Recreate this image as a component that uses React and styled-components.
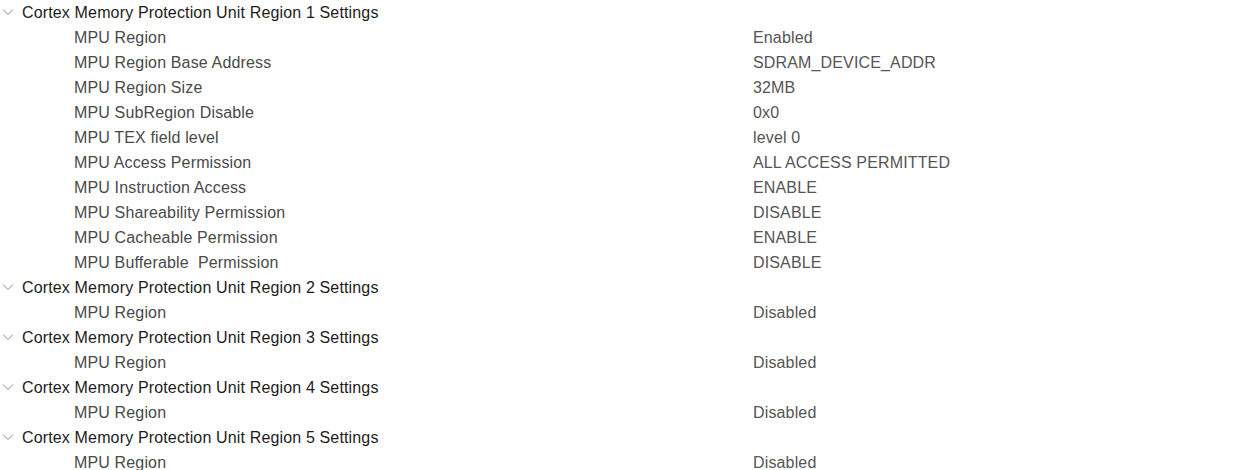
import React from 'react';
import styled, { createGlobalStyle } from 'styled-components';

const GlobalStyle = createGlobalStyle`
  html, body {
    margin: 0;
    padding: 0;
    background: #ffffff;
    overflow: hidden;
  }
`;

const Tree = styled.div`
  width: 1237px;
  height: 470px;
  overflow: hidden;
  font-family: 'Liberation Sans', Arial, sans-serif;
  font-size: 16px;
  letter-spacing: 0.15px;
`;

const Row = styled.div`
  display: grid;
  grid-template-columns: 753px 1fr;
  height: 25px;
  align-items: center;
  white-space: pre;
`;

const GroupLabel = styled.div`
  display: flex;
  align-items: center;
  color: #1c1c1c;
`;

const Chevron = styled.svg`
  width: 22px;
  height: 25px;
  flex: none;
`;

const ItemLabel = styled.div`
  padding-left: 74px;
  color: #4a4a4a;
`;

const Value = styled.div`
  color: #555555;
`;

const groups = [
  {
    title: 'Cortex Memory Protection Unit Region 1 Settings',
    items: [
      ['MPU Region', 'Enabled'],
      ['MPU Region Base Address', 'SDRAM_DEVICE_ADDR'],
      ['MPU Region Size', '32MB'],
      ['MPU SubRegion Disable', '0x0'],
      ['MPU TEX field level', 'level 0'],
      ['MPU Access Permission', 'ALL ACCESS PERMITTED'],
      ['MPU Instruction Access', 'ENABLE'],
      ['MPU Shareability Permission', 'DISABLE'],
      ['MPU Cacheable Permission', 'ENABLE'],
      ['MPU Bufferable  Permission', 'DISABLE'],
    ],
  },
  { title: 'Cortex Memory Protection Unit Region 2 Settings', items: [['MPU Region', 'Disabled']] },
  { title: 'Cortex Memory Protection Unit Region 3 Settings', items: [['MPU Region', 'Disabled']] },
  { title: 'Cortex Memory Protection Unit Region 4 Settings', items: [['MPU Region', 'Disabled']] },
  { title: 'Cortex Memory Protection Unit Region 5 Settings', items: [['MPU Region', 'Disabled']] },
];

const App = () => (
  <>
    <GlobalStyle />
    <Tree>
      {groups.map((g) => (
        <React.Fragment key={g.title}>
          <Row>
            <GroupLabel>
              <Chevron viewBox="0 0 22 25">
                <path d="M3 9.5 L8 14.5 L13 9.5" fill="none" stroke="#8a8a8a" strokeWidth="1" />
              </Chevron>
              {g.title}
            </GroupLabel>
            <div />
          </Row>
          {g.items.map(([label, value]) => (
            <Row key={label}>
              <ItemLabel>{label}</ItemLabel>
              <Value>{value}</Value>
            </Row>
          ))}
        </React.Fragment>
      ))}
    </Tree>
  </>
);

export default App;
